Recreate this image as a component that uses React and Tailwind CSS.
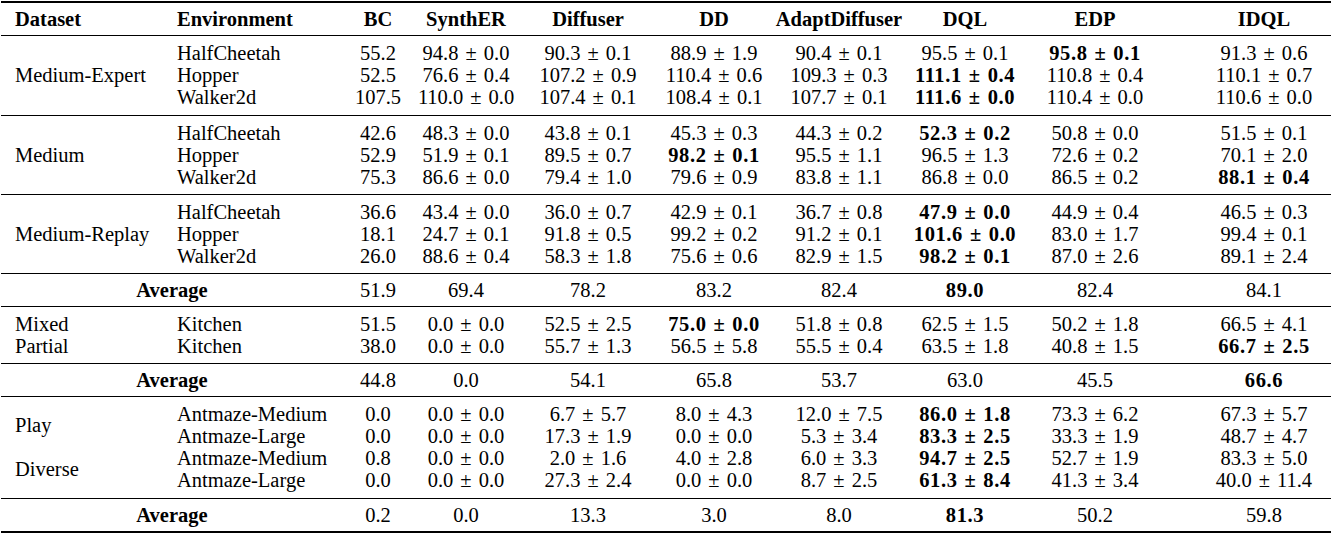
import React from 'react';

const VALS = 'grid grid-cols-[84px_92px_152px_100px_150px_102px_158px_158px]';

const methods = ['BC', 'SynthER', 'Diffuser', 'DD', 'AdaptDiffuser', 'DQL', 'EDP', 'IDQL'];

// '*' = bold (best result)
const sections = [
  {
    labels: [{ text: 'Medium-Expert', rows: 3 }],
    pad: 'pt-[6px] pb-[7px]',
    rows: [
      ['HalfCheetah', '55.2', '94.8±0.0', '90.3±0.1', '88.9±1.9', '90.4±0.1', '95.5±0.1', '*95.8±0.1', '91.3±0.6'],
      ['Hopper', '52.5', '76.6±0.4', '107.2±0.9', '110.4±0.6', '109.3±0.3', '*111.1±0.4', '110.8±0.4', '110.1±0.7'],
      ['Walker2d', '107.5', '110.0±0.0', '107.4±0.1', '108.4±0.1', '107.7±0.1', '*111.6±0.0', '110.4±0.0', '110.6±0.0'],
    ],
  },
  {
    labels: [{ text: 'Medium', rows: 3 }],
    rows: [
      ['HalfCheetah', '42.6', '48.3±0.0', '43.8±0.1', '45.3±0.3', '44.3±0.2', '*52.3±0.2', '50.8±0.0', '51.5±0.1'],
      ['Hopper', '52.9', '51.9±0.1', '89.5±0.7', '*98.2±0.1', '95.5±1.1', '96.5±1.3', '72.6±0.2', '70.1±2.0'],
      ['Walker2d', '75.3', '86.6±0.0', '79.4±1.0', '79.6±0.9', '83.8±1.1', '86.8±0.0', '86.5±0.2', '*88.1±0.4'],
    ],
  },
  {
    labels: [{ text: 'Medium-Replay', rows: 3 }],
    rows: [
      ['HalfCheetah', '36.6', '43.4±0.0', '36.0±0.7', '42.9±0.1', '36.7±0.8', '*47.9±0.0', '44.9±0.4', '46.5±0.3'],
      ['Hopper', '18.1', '24.7±0.1', '91.8±0.5', '99.2±0.2', '91.2±0.1', '*101.6±0.0', '83.0±1.7', '99.4±0.1'],
      ['Walker2d', '26.0', '88.6±0.4', '58.3±1.8', '75.6±0.6', '82.9±1.5', '*98.2±0.1', '87.0±2.6', '89.1±2.4'],
    ],
    average: ['51.9', '69.4', '78.2', '83.2', '82.4', '*89.0', '82.4', '84.1'],
  },
  {
    labels: [{ text: 'Mixed', rows: 1 }, { text: 'Partial', rows: 1 }],
    rows: [
      ['Kitchen', '51.5', '0.0±0.0', '52.5±2.5', '*75.0±0.0', '51.8±0.8', '62.5±1.5', '50.2±1.8', '66.5±4.1'],
      ['Kitchen', '38.0', '0.0±0.0', '55.7±1.3', '56.5±5.8', '55.5±0.4', '63.5±1.8', '40.8±1.5', '*66.7±2.5'],
    ],
    average: ['44.8', '0.0', '54.1', '65.8', '53.7', '63.0', '45.5', '*66.6'],
  },
  {
    labels: [{ text: 'Play', rows: 2 }, { text: 'Diverse', rows: 2 }],
    pad: 'pt-[6px] pb-[7px]',
    rows: [
      ['Antmaze-Medium', '0.0', '0.0±0.0', '6.7±5.7', '8.0±4.3', '12.0±7.5', '*86.0±1.8', '73.3±6.2', '67.3±5.7'],
      ['Antmaze-Large', '0.0', '0.0±0.0', '17.3±1.9', '0.0±0.0', '5.3±3.4', '*83.3±2.5', '33.3±1.9', '48.7±4.7'],
      ['Antmaze-Medium', '0.8', '0.0±0.0', '2.0±1.6', '4.0±2.8', '6.0±3.3', '*94.7±2.5', '52.7±1.9', '83.3±5.0'],
      ['Antmaze-Large', '0.0', '0.0±0.0', '27.3±2.4', '0.0±0.0', '8.7±2.5', '*61.3±8.4', '41.3±3.4', '40.0±11.4'],
    ],
    average: ['0.2', '0.0', '13.3', '3.0', '8.0', '*81.3', '50.2', '59.8'],
  },
];

const Rule = ({ thick }) => (
  <div className={thick ? 'mx-[1px] h-[2px] bg-black' : 'mx-[1px] h-px bg-black'} />
);

const Val = ({ v }) => {
  const bold = v.startsWith('*');
  const s = bold ? v.slice(1) : v;
  const [a, b] = s.split('±');
  return (
    <span className={bold ? 'font-bold tracking-[0.6px]' : ''}>
      {a}
      {b !== undefined && (
        <>
          <span className="px-[7px]">±</span>
          {b}
        </>
      )}
    </span>
  );
};

const Values = ({ vals }) => (
  <div className={VALS}>
    {vals.map((v, i) => (
      <div key={i} className={`flex justify-center whitespace-nowrap ${i === 7 ? 'pl-[22px]' : ''}`}>
        <Val v={v} />
      </div>
    ))}
  </div>
);

const Section = ({ sec }) => (
  <div className={`flex ${sec.pad || 'py-[6px]'}`}>
    <div className="w-[165px] flex flex-col">
      {sec.labels.map((l, i) => (
        <div
          key={i}
          className={`flex items-center pl-[15px] ${l.rows === 3 ? 'h-[66px]' : l.rows === 2 ? 'h-[44px]' : 'h-[22px]'}`}
        >
          {l.text}
        </div>
      ))}
    </div>
    <div className="flex flex-col">
      {sec.rows.map((r, i) => (
        <div key={i} className="flex h-[22px] items-center">
          <div className="w-[171px] pl-[12px] whitespace-nowrap">{r[0]}</div>
          <Values vals={r.slice(1)} />
        </div>
      ))}
    </div>
  </div>
);

const Average = ({ vals }) => (
  <div className="flex h-[32px] items-center">
    <div className="w-[336px] pl-[8px] text-center font-bold">Average</div>
    <Values vals={vals} />
  </div>
);

export default function App() {
  return (
    <div
      className="w-[1332px] h-[537px] bg-white text-black text-[20.5px] leading-[22px] overflow-hidden"
      style={{ fontFamily: '"Liberation Serif", "Times New Roman", serif' }}
    >
      <div className="pt-[1px]">
        <Rule thick />
        <div className="flex h-[32px] items-center font-bold">
          <div className="w-[165px] pl-[15px]">Dataset</div>
          <div className="w-[171px] pl-[12px]">Environment</div>
          <div className={VALS}>
            {methods.map((m, i) => (
              <div key={m} className={`flex justify-center ${i === 7 ? 'pl-[22px]' : ''}`}>
                {m}
              </div>
            ))}
          </div>
        </div>
        {sections.map((sec, i) => (
          <React.Fragment key={i}>
            <Rule />
            <Section sec={sec} />
            {sec.average && (
              <>
                <Rule />
                <Average vals={sec.average} />
              </>
            )}
          </React.Fragment>
        ))}
        <Rule thick />
      </div>
    </div>
  );
}
